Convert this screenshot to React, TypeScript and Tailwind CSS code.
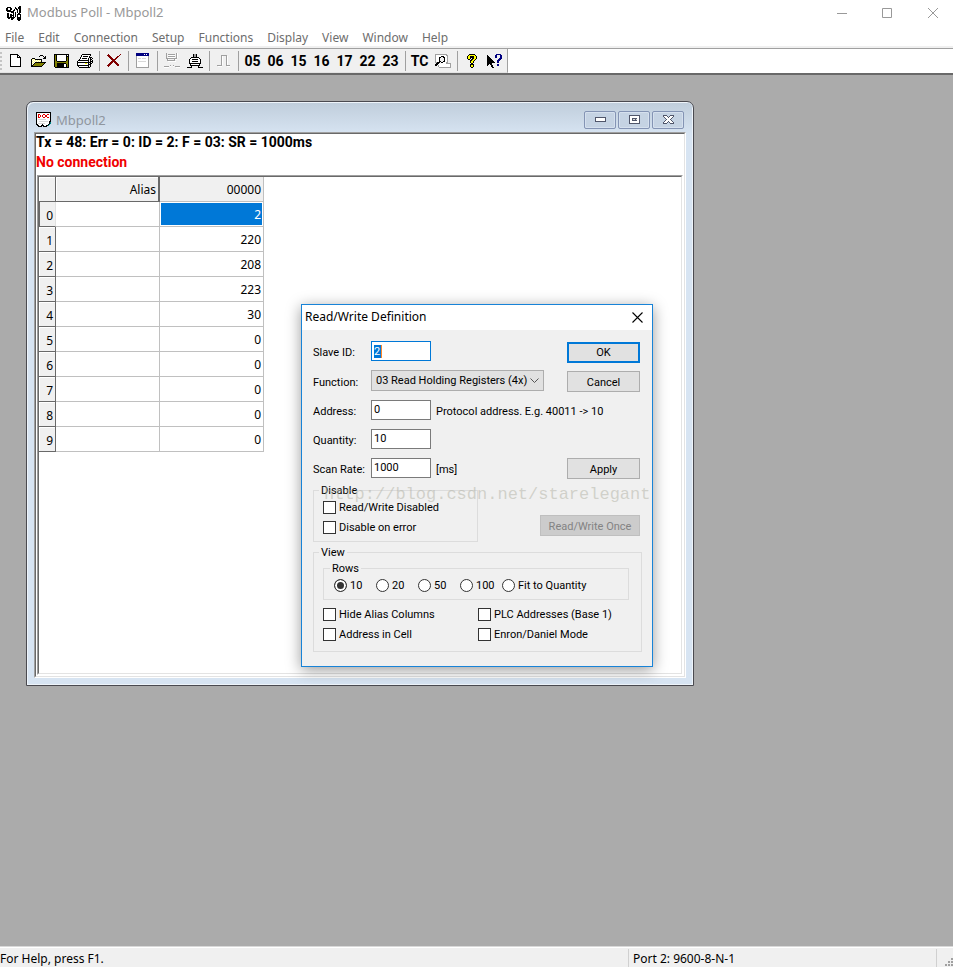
import React from "react";

const UI = "font-['Noto_Sans','Noto_Sans_CJK_SC',sans-serif]";
const SYS = "font-[Roboto,'Liberation_Sans',sans-serif]";

const PALETTE: Record<string, string> = {
  k: "#000000",
  w: "#ffffff",
  y: "#ffff80",
  Y: "#ffff00",
  o: "#808000",
  g: "#a0a0a0",
  l: "#d8d8d8",
  r: "#800000",
  R: "#e00000",
  b: "#000080",
  t: "#008080",
  d: "#50566a",
};

function Pixels({ map }: { map: string[] }) {
  const width = Math.max(...map.map((row) => row.length));
  return (
    <svg width={width} height={map.length} viewBox={`0 0 ${width} ${map.length}`} shapeRendering="crispEdges" aria-hidden="true" className="block shrink-0">
      {map.flatMap((row, y) =>
        [...row].map((c, x) => (PALETTE[c] ? <rect key={`${x}-${y}`} x={x} y={y} width={1} height={1} fill={PALETTE[c]} /> : null)),
      )}
    </svg>
  );
}

const ICON_APP = [
  ".............kk.",
  ".kkkk....k..kkk.",
  "kkwwkk...kk.kkk.",
  "kkwwkk..k.kk.kk.",
  "kkkkk..kk..k.kk.",
  ".kkkkkkk...k.kk.",
  ".....kkk.k.k.kk.",
  ".kk....k.k..kk..",
  ".kk.kk.k.k.kkkk.",
  ".kk.kkkk.k.kwwk.",
  ".kk.kk.k.k.kwwk.",
  ".kkkkkkkk..kkkk.",
  "..kk.kkk...kkkk.",
  ".....kk....kkkk.",
  "............kk..",
];
const ICON_NEW = [
  "kkkkkkkk...",
  "kwwwwwwkk..",
  "kwwwwwwkwk.",
  "kwwwwwwkkkk",
  "kwwwwwwwwwk",
  "kwwwwwwwwwk",
  "kwwwwwwwwwk",
  "kwwwwwwwwwk",
  "kwwwwwwwwwk",
  "kwwwwwwwwwk",
  "kwwwwwwwwwk",
  "kwwwwwwwwwk",
  "kkkkkkkkkkk",
];
const ICON_OPEN = [
  ".........kkk...",
  "........k...k.k",
  ".............kk",
  ".kkk........kkk",
  "kywykkkkkkk....",
  "kwywywywywk....",
  "kywywywywyk....",
  "kwywkkkkkkkkkkk",
  "kywkoooooooook.",
  "kwkoooooooook..",
  "kkoooooooook...",
  "kkkkkkkkkkk....",
];
const ICON_SAVE = [
  "kkkkkkkkkkkkkkk",
  "kokwwwwwwwwwkwk",
  "kokwwwwwwwwwkkk",
  "kokwwwwwwwwwkok",
  "kokwwwwwwwwwkok",
  "kokwwwwwwwwwkok",
  "kokwwwwwwwwwkok",
  "kookkkkkkkkkook",
  "koooooooooooook",
  "kookkkkkkkkkook",
  "kookkkkkkkwwkok",
  "kookkkkkkkwwkok",
  "kookkkkkkkwwkok",
  ".kkkkkkkkkkkkkk",
];
const ICON_PRINT = [
  ".....kkkkkkkkk..",
  "....kwwwwwwwwk..",
  "....kwkkkkkwk...",
  "...kwwwwwwwwkkk.",
  "...kwkkkkkwk.k.k",
  "..kwwwwwwwwk.kk.",
  ".kkkkkkkkkkk.k.k",
  "kwwwwwwwwwwk.kkk",
  "kkkkkkkkkkkkkk.k",
  "kwwwwwwwYYwk.kk.",
  "kwwwwwwwwwwkkk..",
  "kkkkkkkkkkkk.k..",
  ".kwwwwwwwwwk.k..",
  "..kkkkkkkkkkk...",
];
const ICON_DELETE = [
  ".r...........r",
  "rrr.........r.",
  ".rrr......rr..",
  "..rrr....rr...",
  "...rrr..rr....",
  "....rrrrr.....",
  ".....rrr......",
  "....rrrrr.....",
  "...rrr.rrr....",
  "..rrr...rrr...",
  ".rrr.....rrr..",
  "rrr.......rr..",
  ".r............",
];
const ICON_WINDOW = [
  "bbbbbbbbbbbbb",
  "bbbbbbbbwbwbb",
  "bbbbbbbbbbbbb",
  "gwwwwwwwwwwwg",
  "gwwwwwwwwwwwg",
  "gwlllwllllwwg",
  "gwwwwwwwwwwwg",
  "gwwwwwwwwwwwg",
  "gwllllllllwwg",
  "gwwwwwwwwwwwg",
  "gwwwwwwwwwwwg",
  "gwwwwwwwwwwwg",
  "gwwwwwwwwwwwg",
  "gwwwwwwwwwwwg",
  "ggggggggggggg",
];
const ICON_CONNECT = [
  "..g.........gw..",
  "..g.ggggggg.gw..",
  "..g.wwwwwww.gw..",
  "..g.ggggggg.gw..",
  "..g.wwwwwww.gw..",
  "..ggggggggggg...",
  "...gw.....gww...",
  "...gggggggg.....",
  "....wwwwwwww....",
  "................",
  "................",
  "................",
  "......g..g......",
  "ggggg.w..w.ggggg",
  "wwwww.......wwww",
];
const ICON_DISCONNECT = [
  "......kggk......",
  "......kggk......",
  "......kggk......",
  "....kkkkkkkk....",
  "...kwwwwwwwwk...",
  "..kwwkkkkkkwwk..",
  "..kwwwwwwwwwwk..",
  "..kwwkkkkkkwwk..",
  "..kwwwwwwwwwwk..",
  "..kkkkkkkkkkkk..",
  "...kwwwwwwwwk...",
  "...kkkkkkkkkk...",
  "....k......k....",
  "kkkkk......kkkkk",
];
const ICON_PULSE = [
  "....gggggg...",
  "....gw...gw..",
  "....gw...gw..",
  "....gw...gw..",
  "....gw...gw..",
  "....gw...gw..",
  "....gw...gw..",
  "....gw...gw..",
  "....gw...gw..",
  "....gw...gw..",
  "ggggg....gggg",
  ".wwww.....www",
];
const ICON_TRAFFIC = [
  "gggggggggggg....",
  "gwwwwwwwwwwgg...",
  "gwwwwwkkkwwwg...",
  "gwwwkk..kkwwg...",
  "gwwwk....kwwg...",
  "gwwwk....kwwg...",
  "gwwwk....kwwg...",
  "gwwwkk..kkwwg...",
  "ggkkkwkkwwwgg...",
  ".kkk..wwwwwggggg",
  "kkkwwwwwwwwwwwwg",
  "kk.gwwwwwwwwwwwg",
  "...gwwwwwwwwwwwg",
  "....gggggggggggg",
];
const ICON_HELP = [
  "..kkkkkk..",
  ".kYYYYYYk.",
  "kYYkkkkYYk",
  "kYYkkkkYYk",
  "kYYk.kkYYk",
  ".kk.kkYYk.",
  "...kkYYk..",
  "...kYYk...",
  "...kYYk...",
  "....kk....",
  "...kkkk...",
  "...kYYk...",
  "...kYYk...",
  "....kk....",
];
const ICON_CONTEXT_HELP = [
  ".........bbbbb..",
  "k.......bb...bb.",
  "kk......bb...bb.",
  "kkk.....bb...bb.",
  "kkkk........bbb.",
  "kkkkk......bbb..",
  "kkkkkk....bbb...",
  "kkkkkkk...bb....",
  "kkkkkkkk..bb....",
  "kkkkk...........",
  "kk.kk.....bb....",
  "k...kk....bb....",
  "....kk..........",
  ".....kk.........",
];
const ICON_DOC = [
  "kkkkkkkkkkkkkkk",
  "kwwwwwwwwwwwwwk",
  "kwRRwwwRRwwRRwk",
  "kwRwRwRwwRRwwwk",
  "kwRwRwRwwRRwwwk",
  "kwRRwwwRRwwRRwk",
  "kwwwwwwwwwwwwwk",
  "kwllllllllwwwwk",
  "kwwwwwwwwwwwwwk",
  "kwwlllllllllwkk",
  "kwwwwwwwwwwwwkt",
  "kwlllllllwwwwkt",
  "kkwwwwkwwwwwkt.",
  ".kkwwkkkwwkkt..",
  "..kkkk.kkkk....",
];
const ICON_MIN = ["ddddddddddd", "dwwwwwwwwwd", "dwwwwwwwwwd", "dwwwwwwwwwd", "ddddddddddd"];
const ICON_MAX = [
  "ddddddddddd",
  "dwwwwwwwwwd",
  "dwwwwwwwwwd",
  "dwwdddddwwd",
  "dwwdlldlwwd",
  "dwwdddddwwd",
  "dwwwwwwwwwd",
  "dwwwwwwwwwd",
  "ddddddddddd",
];
const ICON_CLOSE = [
  "dddd...dddd",
  "dwwwd.dwwwd",
  ".dwwwdwwwd.",
  "..dwwwwwd..",
  "...dwwwd...",
  "..dwwwwwd..",
  ".dwwwdwwwd.",
  "dwwwd.dwwwd",
  "dddd...dddd",
];
const ICON_GRIP = ["......gg", "......gg", "........", "...gg.gg", "...gg.gg", "........", "gg.gg.gg", "gg.gg.gg", "........"];

function Tool({ label, children }: { label: string; children: React.ReactNode }) {
  return (
    <button type="button" aria-label={label} className="flex h-[22px] w-[23px] shrink-0 items-center justify-center text-[14px] leading-none font-bold text-black">
      {children}
    </button>
  );
}

function Sep() {
  return (
    <span className="flex w-[6px] shrink-0 justify-center">
      <span className="h-[20px] w-px bg-[#a0a0a0]" />
    </span>
  );
}

function CaptionButton({ label, map }: { label: string; map: string[] }) {
  return (
    <button type="button" aria-label={label} className="flex h-[18px] w-[32px] items-center justify-center rounded-[2px] border border-[#8494b4] bg-[#c5d3e3] shadow-[inset_0_0_0_1px_#d5e0ee]">
      <Pixels map={map} />
    </button>
  );
}

const VALUES = [2, 220, 208, 223, 30, 0, 0, 0, 0, 0];

function RegisterTable() {
  return (
    <table className="w-[225px] table-fixed border-separate border-spacing-0 text-right text-[12px] leading-[16px]">
      <colgroup>
        <col className="w-[17px]" />
        <col className="w-[104px]" />
        <col className="w-[104px]" />
      </colgroup>
      <thead>
        <tr className="h-[25px] bg-[#f0f0f0]">
          <th className="border-r border-b border-[#696969] shadow-[inset_1px_1px_#fff]" />
          <th className="border-r-2 border-b border-[#696969] pt-[2px] pr-[2px] font-normal shadow-[inset_1px_1px_#fff]">Alias</th>
          <th className="border-r border-b border-[#c0c0c0] pt-[2px] pr-[2px] font-normal">00000</th>
        </tr>
      </thead>
      <tbody>
        {VALUES.map((v, i) => (
          <tr key={i} className="h-[25px]">
            <th className={`border-r border-b border-[#696969] bg-[#f0f0f0] pt-[3px] pr-[2px] font-normal ${i === 0 ? "border-l border-r-[#e0e0e0]" : "shadow-[inset_1px_1px_#fff]"}`}>{i}</th>
            <td className="border-r border-b border-[#c0c0c0]" />
            <td className="border-r border-b border-[#c0c0c0] p-px">
              <div className={`flex h-[22px] items-center justify-end pt-px pr-px ${i === 0 ? "bg-[#0078d7] text-white" : ""}`}>{v}</div>
            </td>
          </tr>
        ))}
      </tbody>
    </table>
  );
}

function DocumentWindow() {
  return (
    <section aria-label="Mbpoll2" className="absolute top-[26px] left-[26px] flex h-[585px] w-[668px] flex-col rounded-t-[7px] border border-[#4a4a50] bg-[#d7e4f2] bg-linear-to-b from-[#bfcddb] to-[#d7e4f2] to-[32px] p-[7px] pt-0 shadow-[inset_1px_1px_#eef4fa,inset_-1px_-1px_#eef4fa]">
      <header className="flex h-[30px] shrink-0 items-center pt-[5px] pr-[2px] pl-[2px]">
        <Pixels map={ICON_DOC} />
        <h2 className="flex-1 pt-[2px] pl-[5px] text-[13px] text-[#8f969e]">Mbpoll2</h2>
        <div className="flex gap-[2px]">
          <CaptionButton label="Minimize document" map={ICON_MIN} />
          <CaptionButton label="Maximize document" map={ICON_MAX} />
          <CaptionButton label="Close document" map={ICON_CLOSE} />
        </div>
      </header>
      <div className="flex min-h-0 flex-1 flex-col border border-t-[#a0a0a0] border-r-white border-b-white border-l-[#a0a0a0] bg-white">
        <div className="flex min-h-0 flex-1 flex-col border border-t-[#696969] border-r-[#e3e3e3] border-b-[#e3e3e3] border-l-[#696969]">
          <div className={`h-[41px] shrink-0 text-[14px] font-bold ${SYS}`}>
            <p className="h-[20px] leading-[17px]">Tx = 48: Err = 0: ID = 2: F = 03: SR = 1000ms</p>
            <p className="leading-[17px] text-[#f00000]">No connection</p>
          </div>
          <div className="mx-px mb-px flex min-h-0 flex-1 flex-col border border-t-[#a0a0a0] border-r-white border-b-white border-l-[#a0a0a0]">
            <div className="min-h-0 flex-1 border border-t-[#696969] border-r-[#e3e3e3] border-b-[#e3e3e3] border-l-[#696969]">
              <RegisterTable />
            </div>
          </div>
        </div>
      </div>
    </section>
  );
}

const LABEL = "w-[58px] shrink-0 whitespace-nowrap pt-[3px]";
const FIELD = "h-[20px] w-[60px] border border-[#7a7a7a] bg-white px-[2px] outline-none";
const BUTTON = "mt-[2px] mr-[2px] ml-auto h-[21px] w-[73px] border border-[#adadad] bg-[#e1e1e1] pt-px";

function Field({ id, label, value, note, children }: { id: string; label: string; value: string; note?: string; children?: React.ReactNode }) {
  return (
    <div className="flex h-[29px] items-center">
      <label htmlFor={id} className={LABEL}>{label}</label>
      <input id={id} type="text" defaultValue={value} className={FIELD} />
      {note && <span className="pt-[3px] pl-[5px]">{note}</span>}
      {children}
    </div>
  );
}

function Check({ label }: { label: string }) {
  return (
    <label className="flex h-[20px] items-center gap-[3px]">
      <input type="checkbox" className="size-[13px] appearance-none border border-[#333333] bg-white" />
      <span className="pt-px">{label}</span>
    </label>
  );
}

function Radio({ label, checked }: { label: string; checked?: boolean }) {
  return (
    <label className="flex h-[20px] min-w-[42px] items-center gap-[3px] whitespace-nowrap">
      <input
        type="radio"
        name="rows"
        defaultChecked={checked}
        className="size-[13px] appearance-none rounded-full border border-[#333333] bg-white checked:bg-[#333333] checked:shadow-[inset_0_0_0_2px_#fff]"
      />
      <span className="pt-px">{label}</span>
    </label>
  );
}

function DefinitionDialog() {
  return (
    <section role="dialog" aria-label="Read/Write Definition" className={`absolute top-[229px] left-[301px] w-[352px] border border-[#1883d7] bg-[#f0f0f0] text-[11px] leading-[13px] shadow-[0_3px_14px_rgba(0,0,0,0.4)] ${SYS}`}>
      <header className={`flex h-[25px] items-center justify-between bg-white pr-[9px] pb-px pl-[3px] ${UI}`}>
        <h2 className="text-[12px] leading-[16px]">Read/Write Definition</h2>
        <button type="button" aria-label="Close dialog">
          <svg width="11" height="11" viewBox="0 0 11 11" className="block" aria-hidden="true">
            <path d="M0.5 0.5 10.5 10.5M10.5 0.5 0.5 10.5" stroke="#000" strokeWidth="1.1" />
          </svg>
        </button>
      </header>
      <form className="pt-[6px] pr-[10px] pb-[14px] pl-[11px]" onSubmit={(e) => e.preventDefault()}>
        <div className="flex h-[30px] items-center">
          <label htmlFor="slave" className={LABEL}>Slave ID:</label>
          <div className="flex h-[20px] w-[60px] items-center border border-[#0078d7] bg-white px-[2px]">
            <input id="slave" type="text" defaultValue="2" className="h-[13px] w-[8px] border-r border-[#ff8728] bg-[#0078d7] text-white outline-none" />
          </div>
          <button type="submit" className="mt-[2px] mr-[2px] ml-auto h-[21px] w-[73px] border-2 border-[#0078d7] bg-[#e1e1e1] pt-px">OK</button>
        </div>
        <div className="flex h-[29px] items-center">
          <label htmlFor="function" className={LABEL}>Function:</label>
          <div className="grid h-[21px] w-[173px] items-center border border-[#adadad] bg-[#e1e1e1]">
            <select id="function" className="col-start-1 row-start-1 h-full w-full appearance-none pl-[4px] whitespace-nowrap outline-none">
              <option>03 Read Holding Registers (4x)</option>
            </select>
            <svg width="9" height="6" viewBox="0 0 9 6" className="pointer-events-none col-start-1 row-start-1 mr-[4px] justify-self-end" aria-hidden="true">
              <path d="M0.5 0.5 4.5 4.5 8.5 0.5" fill="none" stroke="#555" />
            </svg>
          </div>
          <button type="button" className={BUTTON}>Cancel</button>
        </div>
        <Field id="address" label="Address:" value="0" note="Protocol address. E.g. 40011 -> 10" />
        <Field id="quantity" label="Quantity:" value="10" />
        <Field id="scan" label="Scan Rate:" value="1000" note="[ms]">
          <button type="button" className={BUTTON}>Apply</button>
        </Field>
        <div className="mt-[2px] flex items-end">
          <fieldset className="w-[165px] border border-[#dcdcdc] pr-[4px] pb-[4px] pl-[9px]">
            <legend className="-ml-[4px] px-[2px]">Disable</legend>
            <Check label="Read/Write Disabled" />
            <Check label="Disable on error" />
          </fieldset>
          <button type="button" disabled className="mr-[2px] mb-[6px] ml-auto h-[21px] w-[100px] border border-[#bfbfbf] bg-[#cccccc] pt-px text-[#838383]">Read/Write Once</button>
        </div>
        <fieldset className="mt-[4px] border border-[#dcdcdc] pt-[3px] pr-[12px] pb-[7px] pl-[9px]">
          <legend className="-ml-[4px] px-[2px]">View</legend>
          <fieldset className="flex border border-[#dcdcdc] pb-[4px] pl-[10px]">
            <legend className="-ml-[4px] px-[2px]">Rows</legend>
            <Radio label="10" checked />
            <Radio label="20" />
            <Radio label="50" />
            <Radio label="100" />
            <Radio label="Fit to Quantity" />
          </fieldset>
          <div className="grid grid-cols-[155px_1fr] pt-[4px]">
            <Check label="Hide Alias Columns" />
            <Check label="PLC Addresses (Base 1)" />
            <Check label="Address in Cell" />
            <Check label="Enron/Daniel Mode" />
          </div>
        </fieldset>
      </form>
      <p className="pointer-events-none absolute top-[180px] left-[22px] font-['Liberation_Mono',monospace] text-[17px] leading-[20px] whitespace-nowrap text-[#b0b0a4]/50">
        http://blog.csdn.net/starelegant
      </p>
    </section>
  );
}

const MENUS = ["File", "Edit", "Connection", "Setup", "Functions", "Display", "View", "Window", "Help"];
const CODES = ["05", "06", "15", "16", "17", "22", "23"];

export default function App() {
  return (
    <div className={`flex h-screen flex-col overflow-hidden bg-white text-black ${UI}`}>
      <header className="flex h-[26px] shrink-0 items-center pl-[6px]">
        <Pixels map={ICON_APP} />
        <h1 className="flex-1 pl-[5px] text-[13px] text-[#999999]">Modbus Poll - Mbpoll2</h1>
        <div className="flex pr-[15px]">
          <button type="button" aria-label="Minimize" className="mr-[35px]">
            <svg width="10" height="10" viewBox="0 0 10 10" aria-hidden="true"><path d="M0 5.5H10" stroke="#999" /></svg>
          </button>
          <button type="button" aria-label="Maximize" className="mr-[36px]">
            <svg width="10" height="10" viewBox="0 0 10 10" aria-hidden="true"><path d="M.5.5h9v9h-9z" fill="none" stroke="#999" /></svg>
          </button>
          <button type="button" aria-label="Close">
            <svg width="10" height="10" viewBox="0 0 10 10" aria-hidden="true"><path d="M0 0 10 10M10 0 0 10" stroke="#999" /></svg>
          </button>
        </div>
      </header>
      <nav className="flex h-[22px] shrink-0 items-center gap-[14px] border-b-2 border-[#f0f0f0] pt-[3px] pl-[5px] text-[12px] text-[#6d6d6d]">
        {MENUS.map((m) => (
          <button key={m} type="button">{m}</button>
        ))}
      </nav>
      <div role="toolbar" aria-label="Standard" className="flex h-[27px] shrink-0 border-t border-b-2 border-t-[#a0a0a0] border-b-[#696969] bg-white">
        <div className={`flex items-center border-r border-b border-r-[#a0a0a0] border-b-[#e3e3e3] bg-[#f0f0f0] pr-px ${SYS}`}>
          <span className="mr-[2px] h-[18px] w-[2px] bg-[repeating-linear-gradient(#c4c4c4_0_2px,#f0f0f0_2px_4px)]" />
          <Tool label="New"><Pixels map={ICON_NEW} /></Tool>
          <Tool label="Open"><Pixels map={ICON_OPEN} /></Tool>
          <Tool label="Save"><Pixels map={ICON_SAVE} /></Tool>
          <Tool label="Print"><Pixels map={ICON_PRINT} /></Tool>
          <Sep />
          <Tool label="Delete"><Pixels map={ICON_DELETE} /></Tool>
          <Sep />
          <Tool label="Window"><Pixels map={ICON_WINDOW} /></Tool>
          <Sep />
          <Tool label="Connect"><Pixels map={ICON_CONNECT} /></Tool>
          <Tool label="Disconnect"><Pixels map={ICON_DISCONNECT} /></Tool>
          <Sep />
          <Tool label="Pulse"><Pixels map={ICON_PULSE} /></Tool>
          <Sep />
          {CODES.map((c) => (
            <Tool key={c} label={`Function ${c}`}>{c}</Tool>
          ))}
          <Sep />
          <Tool label="Test center">TC</Tool>
          <Tool label="Traffic"><Pixels map={ICON_TRAFFIC} /></Tool>
          <Sep />
          <Tool label="About"><Pixels map={ICON_HELP} /></Tool>
          <Tool label="Context help"><Pixels map={ICON_CONTEXT_HELP} /></Tool>
        </div>
      </div>
      <main className="relative min-h-0 flex-1 bg-[#ababab]">
        <DocumentWindow />
        <DefinitionDialog />
      </main>
      <footer className="flex h-[21px] shrink-0 items-stretch border-t border-[#d8d8d8] bg-[#f0f0f0] pt-[2px] text-[12px] leading-[20px] shadow-[inset_0_1px_#fff]">
        <p className="flex-1">For Help, press F1.</p>
        <p className="w-[325px] border-l border-[#d0d0d0] pl-[4px] sm:w-[308px]">Port 2: 9600-8-N-1</p>
        <div className="flex w-[17px] items-end justify-end border-l border-[#d0d0d0]">
          <Pixels map={ICON_GRIP} />
        </div>
      </footer>
    </div>
  );
}
